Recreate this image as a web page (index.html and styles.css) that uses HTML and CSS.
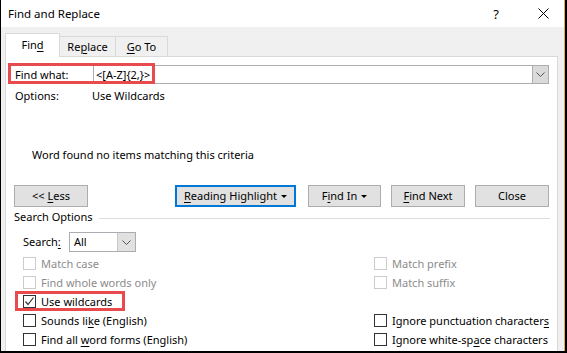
FILE: index.html
```html
<!DOCTYPE html>
<html>
<head>
<meta charset="utf-8">
<link rel="stylesheet" href="styles.css">
</head>
<body>
<div class="window">
  <div class="frame">
    <div class="titlebar">
      <span class="title">Find and Replace</span>
      <span class="help">?</span>
      <span class="close">
        <svg width="11" height="11" viewBox="0 0 11 11"><path d="M0.5 0.5 L10.5 10.5 M10.5 0.5 L0.5 10.5" stroke="#000" stroke-width="1" fill="none"/></svg>
      </span>
    </div>
    <div class="body">
      <div class="tabs">
        <div class="tab active"><span>Fin<u>d</u></span></div>
        <div class="tab tab-replace"><span>Re<u>p</u>lace</span></div>
        <div class="tab tab-goto"><span><u>G</u>o To</span></div>
      </div>
      <div class="panel">
        <div class="find-row">
          <label class="find-label">Fi<u>n</u>d what:</label>
          <div class="combo">
            <span class="combo-text">&lt;[A-Z]{2,}&gt;</span>
            <span class="combo-btn">
              <svg width="9" height="5" viewBox="0 0 9 5"><path d="M0.5 0.5 L4.5 4.5 L8.5 0.5" stroke="#555" stroke-width="1" fill="none"/></svg>
            </span>
          </div>
          <span class="mark mark-find"></span>
        </div>
        <div class="options-row">
          <span class="options-label">Options:</span>
          <span class="options-value">Use Wildcards</span>
        </div>
        <div class="message">Word found no items matching this criteria</div>
        <div class="buttons">
          <button class="btn btn-less"><span>&lt;&lt; <u>L</u>ess</span></button>
          <button class="btn btn-reading"><span><u>R</u>eading Highlight</span><span class="caret"></span></button>
          <button class="btn btn-findin"><span>F<u>i</u>nd In</span><span class="caret"></span></button>
          <button class="btn btn-next"><span><u>F</u>ind Next</span></button>
          <button class="btn btn-close"><span>Close</span></button>
        </div>
        <div class="section-head">
          <span>Search Options</span>
          <span class="section-line"></span>
        </div>
        <div class="search-row">
          <span class="search-label">Search<u>:</u></span>
          <div class="select">
            <span class="select-text">All</span>
            <span class="select-btn">
              <svg width="9" height="5" viewBox="0 0 9 5"><path d="M0.5 0.5 L4.5 4.5 L8.5 0.5" stroke="#555" stroke-width="1" fill="none"/></svg>
            </span>
          </div>
        </div>
        <div class="checks">
          <div class="check disabled"><span class="box"></span><span class="lbl">Match case</span></div>
          <div class="check disabled"><span class="box"></span><span class="lbl">Match prefix</span></div>
          <div class="check disabled"><span class="box"></span><span class="lbl">Find whole words only</span></div>
          <div class="check disabled"><span class="box"></span><span class="lbl">Match suffix</span></div>
          <div class="check wild">
            <span class="box"><svg width="11" height="11" viewBox="0 0 11 11"><path d="M1.5 5.5 L4 8.5 L9.5 1.5" stroke="#333" stroke-width="1.2" fill="none"/></svg></span><span class="lbl"><u>U</u>se wildcards</span>
            <span class="mark mark-wild"></span>
          </div>
          <div class="check empty"></div>
          <div class="check"><span class="box"></span><span class="lbl">Sounds li<u>k</u>e (English)</span></div>
          <div class="check"><span class="box"></span><span class="lbl">Ignore punctuation character<u>s</u></span></div>
          <div class="check"><span class="box"></span><span class="lbl">Find all <u>w</u>ord forms (English)</span></div>
          <div class="check"><span class="box"></span><span class="lbl">Ignore white-sp<u>a</u>ce characters</span></div>
        </div>
      </div>
    </div>
  </div>
</div>
</body>
</html>
```

FILE: styles.css
```css
* { box-sizing: border-box; }
html, body { margin: 0; padding: 0; background: #fff; }
body {
  font-family: "Noto Sans", "Open Sans", sans-serif;
  font-size: 11px;
  color: #000;
}
u { text-decoration: underline; text-underline-offset: 2px; }
.lbl { white-space: nowrap; }

.window {
  width: 567px;
  height: 353px;
  border-left: 1px solid #000;
  border-right: 2px solid #000;
  border-bottom: 2px solid #000;
  overflow: hidden;
}
.frame {
  height: 100%;
  border-right: 1px solid #e9a84c;
  display: flex;
  flex-direction: column;
}
.titlebar {
  height: 27px;
  flex: none;
  background: #fff;
  display: flex;
  align-items: center;
  padding-left: 7px;
}
.title { font-size: 11.5px; line-height: 16px; }
.help { margin-left: auto; width: 10px; text-align: center; font-size: 13px; line-height: 16px; }
.close { width: 11px; height: 11px; margin-left: 37px; margin-right: 15px; display: flex; }

.body {
  flex: 1;
  background: #f0f0f0;
  padding: 6px 0 0 4px;
  display: flex;
  flex-direction: column;
}
.tabs {
  display: flex;
  align-items: flex-end;
  height: 23px;
  flex: none;
}
.tab {
  height: 20px;
  border: 1px solid #d9d9d9;
  border-left: 0;
  border-bottom: 0;
  background: #f0f0f0;
  display: flex;
  align-items: center;
  justify-content: center;
  line-height: 16px;
  white-space: nowrap;
}
.tab.active {
  height: 24px;
  width: 55px;
  border-left: 1px solid #d9d9d9;
  background: #fff;
  position: relative;
  z-index: 1;
  margin-bottom: -1px;
  padding-bottom: 1px;
}
.tab-replace { width: 56px; }
.tab-goto { width: 52px; }

.panel {
  flex: 1;
  width: 553px;
  background: #fff;
  border: 1px solid #d9d9d9;
  border-bottom: 0;
  display: flex;
  flex-direction: column;
}

.find-row {
  position: relative;
  display: flex;
  align-items: center;
  margin-top: 8px;
  height: 19px;
  padding-left: 9px;
}
.find-label { width: 78px; flex: none; line-height: 16px; }
.combo {
  width: 456px;
  height: 19px;
  border: 1px solid #abadb3;
  display: flex;
  align-items: stretch;
}
.combo-text { flex: 1; padding-left: 2px; line-height: 17px; }
.combo-btn {
  width: 17px;
  background: #dadada;
  border: 1px solid #adadad;
  margin: -1px -1px -1px 0;
  display: flex;
  align-items: center;
  justify-content: center;
}
.mark {
  position: absolute;
  border: 3px solid #e84a4d;
}
.mark-find { left: 2px; top: -2px; width: 147px; height: 21px; }

.options-row {
  display: flex;
  margin-top: 4px;
  padding-left: 9px;
  line-height: 16px;
}
.options-label { width: 77px; }

.message {
  margin-top: 43px;
  padding-left: 26px;
  line-height: 16px;
}

.buttons {
  display: flex;
  margin-top: 22px;
  padding-left: 8px;
}
.btn {
  font: inherit;
  color: #000;
  height: 22px;
  background: #e1e1e1;
  border: 1px solid #adadad;
  padding: 0;
  display: flex;
  align-items: center;
  justify-content: center;
  line-height: 16px;
  white-space: nowrap;
}
.btn-less { width: 74px; }
.btn-reading { width: 121px; margin-left: 87px; border: 2px solid #0078d7; }
.btn-findin { width: 73px; margin-left: 12px; }
.btn-next { width: 74px; margin-left: 10px; }
.btn-close { width: 74px; margin-left: 10px; }
.caret {
  display: inline-block;
  width: 0;
  height: 0;
  border-left: 3px solid transparent;
  border-right: 3px solid transparent;
  border-top: 3px solid #000;
  margin-left: 4px;
}

.section-head {
  display: flex;
  align-items: center;
  margin-top: 2px;
  padding-left: 8px;
  padding-right: 7px;
  line-height: 16px;
}
.section-line {
  flex: 1;
  height: 1px;
  background: #dcdcdc;
  margin-left: 6px;
  margin-top: 2px;
}

.search-row {
  display: flex;
  align-items: center;
  margin-top: 7px;
  padding-left: 17px;
}
.search-label { width: 46px; line-height: 16px; }
.select {
  width: 67px;
  height: 20px;
  border: 1px solid #abadb3;
  display: flex;
}
.select-text { flex: 1; padding-left: 4px; line-height: 18px; }
.select-btn {
  width: 18px;
  background: #e1e1e1;
  border-left: 1px solid #c8c8c8;
  display: flex;
  align-items: center;
  justify-content: center;
}

.checks {
  display: grid;
  grid-template-columns: 351px 1fr;
  grid-auto-rows: 19px;
  margin-top: 2px;
  padding-left: 17px;
}
.check {
  display: flex;
  align-items: center;
  line-height: 16px;
  position: relative;
}
.box {
  width: 13px;
  height: 13px;
  border: 1px solid #333;
  background: #fff;
  margin-right: 5px;
  flex: none;
  display: flex;
  align-items: center;
  justify-content: center;
}
.check.disabled { color: #8c8c8c; }
.check.disabled .box { border-color: #cccccc; }
.mark-wild { left: -8px; top: -1px; width: 110px; height: 20px; }
```
